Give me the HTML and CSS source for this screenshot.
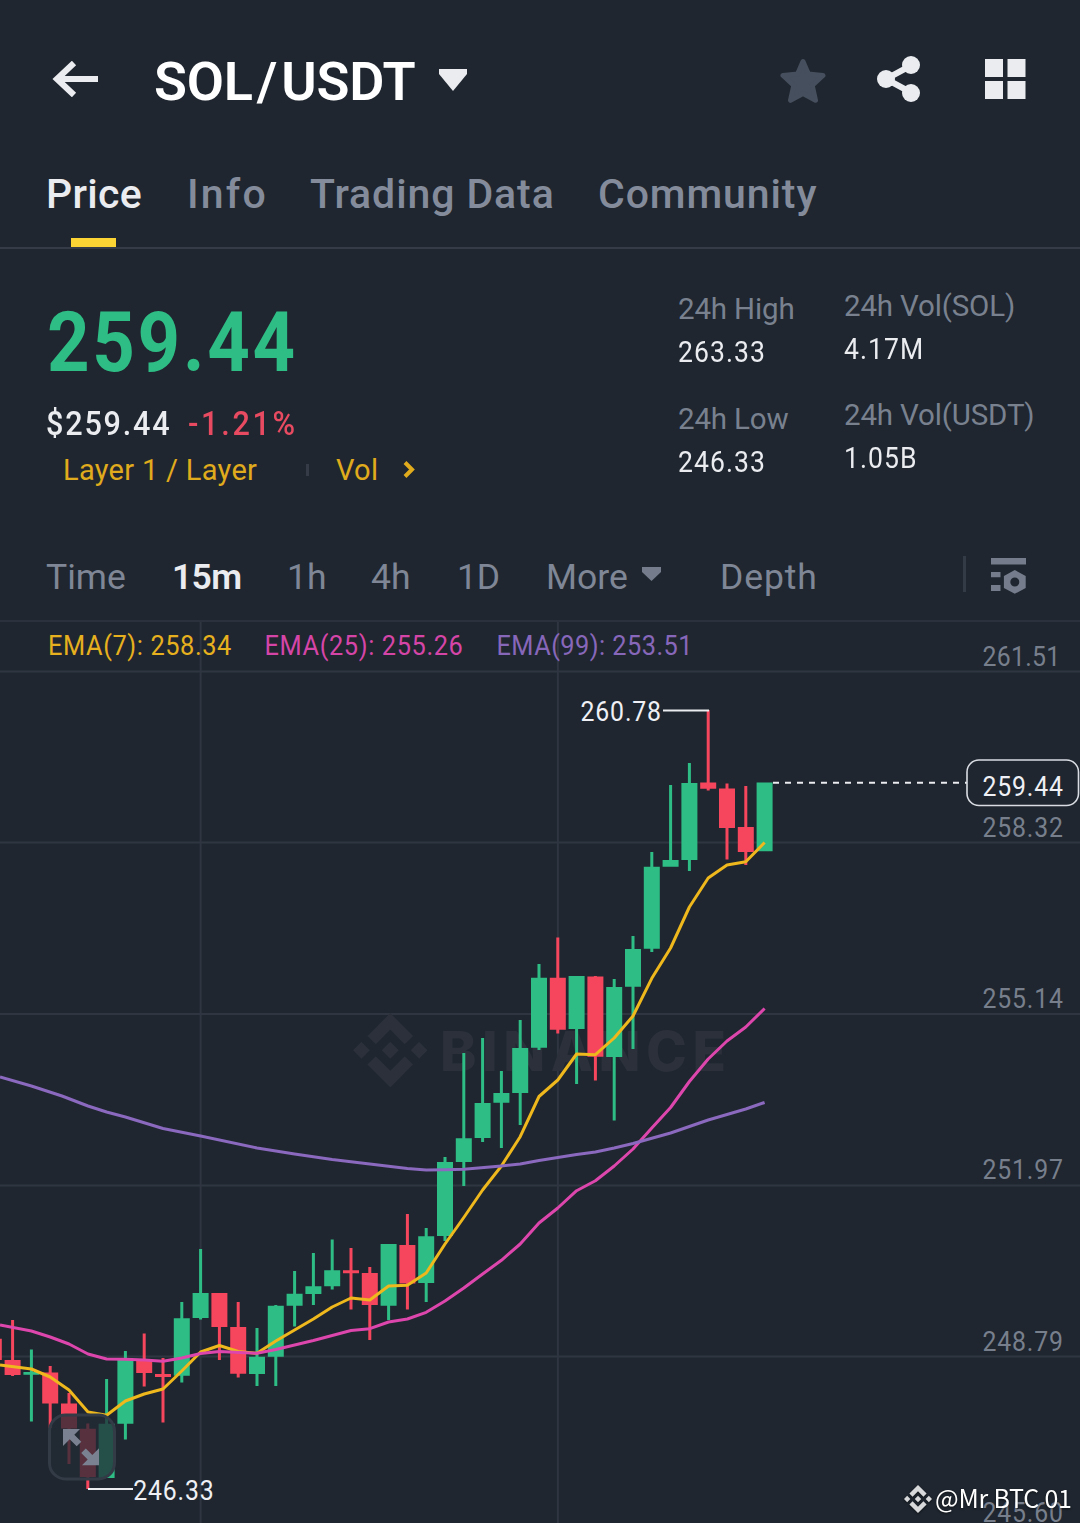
FILE: index.html
```html
<!DOCTYPE html>
<html lang="en">
<head>
<meta charset="utf-8">
<title>SOL/USDT</title>
<link rel="stylesheet" href="styles.css">
</head>
<body>
<svg class="defs" aria-hidden="true">
  <symbol id="logo" viewBox="0 0 126.61 126.61">
    <path d="M38.73 53.2l24.59-24.58 24.6 24.6 14.3-14.31L63.32 0 24.43 38.9zM0 63.31L14.3 49l14.31 14.31-14.31 14.3zM38.73 73.41L63.32 98l24.6-24.6 14.31 14.29-38.91 38.91-38.89-38.88zM98 63.31L112.3 49l14.31 14.3-14.31 14.32zM77.83 63.3L63.32 48.78 48.81 63.28l14.51 14.5z"/>
  </symbol>
</svg>
<main class="screen">
  <header class="header">
    <svg class="back" viewBox="0 0 46 36"><path d="M46 18H6M22 2L5 18l17 16" fill="none" stroke="#eaecf0" stroke-width="6.2"/></svg>
    <h1 class="pair">SOL<span class="slash">/</span>USDT</h1>
    <svg class="pair-caret" viewBox="0 0 28 22"><path d="M0 0h28v5L14 22 0 5z" fill="#eaecf0"/></svg>
    <div class="actions">
      <svg class="star" viewBox="0 0 46 46"><path d="M23 3.500l5.400 12.500 14.600 1.500-10.800 9.800 3.300 15L23 35.500l-12.500 6.800 3.300-15L3 17.500 17.600 16z" fill="#464f5d" stroke="#464f5d" stroke-width="5" stroke-linejoin="round"/></svg>
      <svg class="share" viewBox="0 0 44 46"><path d="M35 9L9 23l26 14" fill="none" stroke="#eaecf0" stroke-width="6"/><g fill="#eaecf0"><circle cx="9" cy="23" r="9"/><circle cx="34" cy="9" r="9"/><circle cx="34" cy="37" r="9"/></g></svg>
      <svg class="grid-icon" viewBox="0 0 40 40"><path d="M0 0h18v18H0zM22.500 0h18v18h-18zM0 22h18v18H0zM22.500 22h18v18h-18z" fill="#eaecf0"/></svg>
    </div>
  </header>

  <nav class="tabs">
    <a class="tab active">Price</a>
    <a class="tab info">Info</a>
    <a class="tab">Trading Data</a>
    <a class="tab">Community</a>
  </nav>

  <section class="summary">
    <div class="quote">
      <div class="last">259.44</div>
      <div class="change"><span class="fiat">$259.44</span><span class="pct">-1.21%</span></div>
      <div class="tags">
        <span class="tag layer">Layer 1 / Layer</span>
        <i class="tag-sep"></i>
        <span class="tag vol">Vol</span>
        <svg class="chevron" viewBox="0 0 12 17"><path d="M2 1.500l7 7-7 7" fill="none" stroke="#e0ab1c" stroke-width="4"/></svg>
      </div>
    </div>
    <dl class="stats">
      <div class="stat"><dt>24h High</dt><dd>263.33</dd></div>
      <div class="stat"><dt>24h Low</dt><dd>246.33</dd></div>
    </dl>
    <dl class="stats volume">
      <div class="stat"><dt>24h Vol(SOL)</dt><dd>4.17M</dd></div>
      <div class="stat"><dt>24h Vol(USDT)</dt><dd>1.05B</dd></div>
    </dl>
  </section>

  <nav class="intervals">
    <a class="interval time">Time</a>
    <a class="interval current">15m</a>
    <a class="interval hour">1h</a>
    <a class="interval">4h</a>
    <a class="interval day">1D</a>
    <a class="interval more">More<svg class="more-caret" viewBox="0 0 19 14"><path d="M0 0h19v5l-9.500 9L0 5z" fill="#757d8c"/></svg></a>
    <a class="interval depth">Depth</a>
    <i class="tool-sep"></i>
    <svg class="tool" viewBox="0 0 36 36"><path d="M0 0h35v6.500H0zM0 14h9.500v5.300H0zM0 27h9.500v6H0z" fill="#757d8c"/><path fill-rule="evenodd" d="M23.800 12l10.900 5.900v12L23.800 35.800 12.900 29.900v-12zM23.800 19.500a4.500 4.500 0 1 0 0 9 4.500 4.500 0 0 0 0-9z" fill="#757d8c"/></svg>
  </nav>

  <section class="chart">
    <svg class="plot" viewBox="0 622 1080 901">
      <path class="gridline" d="M0 671.500H1080M0 842.500H1080M0 1014H1080M0 1185.500H1080M0 1356.500H1080M200.600 622V1523M557.900 622V1523"/>
      <g class="brand">
        <use href="#logo" x="353" y="1013" width="74.500" height="74.500"/>
        <text x="440" y="1071" textLength="286">BINANCE</text>
      </g>
      <g class="axis" transform="translate(982.500 0) scale(.92 1)">
        <text x="0" y="666.500" textLength="84.500">261.51</text>
        <text x="0" y="837.500" textLength="87.500">258.32</text>
        <text x="0" y="1008.500" textLength="87.500">255.14</text>
        <text x="0" y="1179.500" textLength="87.500">251.97</text>
        <text x="0" y="1351.500" textLength="87.500">248.79</text>
        <text x="0" y="1522.500" textLength="87.500">245.60</text>
      </g>

      <path class="wick up" d="M689.400 763V871M670.600 785V866M651.800 852V952M633 936V1049M614.200 979V1120.500M576.600 976V1084M539 964V1050M520.200 1020V1125M501.400 1071V1148M482.600 1038V1142M463.800 1053V1186M445 1157V1241M426.200 1228V1302M388.600 1244V1320M332.200 1239.500V1289.500M313.400 1253V1305M294.600 1271V1326.500M275.800 1305V1386M257 1328V1386M200.600 1249V1319.500M181.800 1302V1382.500M125.400 1351V1439.500M106.600 1379V1477M31.400 1349.500V1421.500"/>
      <path class="wick down" d="M745.800 786V865M727 783.500V859.500M708.200 710V790.500M595.400 976V1080.500M557.800 937.500V1033.500M407.400 1214V1309.500M369.800 1267V1340M351 1248V1309.500M238.200 1302V1377.500M219.400 1293V1360M163 1358V1422.500M144.200 1333.500V1386.500M87.800 1423.500V1489M69 1393V1464M50.200 1366V1428M12.600 1320V1376"/>
      <path class="body up" d="M764.600 782.500V851.300M689.400 783V860M670.600 860V866.700M651.800 866.700V948.700M633 949V986.800M614.200 987V1057M576.600 976V1029M539 977.700V1047.700M520.200 1048V1093M501.400 1093V1102.700M482.600 1103V1138M463.800 1138.300V1162M445 1162V1236M426.200 1236.300V1283M388.600 1244V1305.700M332.200 1270.300V1286.300M313.400 1286.300V1294M294.600 1293.700V1305.700M275.800 1305.700V1356.700M257 1356.700V1374M200.600 1293V1318M181.800 1318.300V1375.700M125.400 1360V1423.700M106.600 1423.700V1478M31.400 1372V1374.800"/>
      <path class="body down" d="M745.800 827V852M727 788.500V828M708.200 782.500V788.700M595.400 976.500V1056.700M557.800 977.700V1029.700M407.400 1245V1283.500M369.800 1273V1305M351 1270.300V1273.200M238.200 1327V1373.700M219.400 1293V1327M163 1374V1377M144.200 1360V1373M87.800 1428.700V1477M69 1403.500V1428.500M50.200 1372.500V1403.500M12.600 1360V1375M-6.200 1338.700V1360"/>

      <polyline class="ema ema7" points="0,1365 31.400,1369 50.200,1377 69,1390 88,1412 106.600,1415.300 125.400,1401 144.200,1394 163,1389 181.800,1371 200.600,1352 219.400,1345.500 238.200,1351.500 257,1353.300 275.800,1341 294.600,1330 313.400,1319 332.200,1307 351,1298 369.800,1300 388.600,1286 407.400,1285.300 426.200,1273 445,1244 463.800,1217.500 482.600,1190 501.400,1166 520.200,1136.700 539,1096.500 557.800,1080 576.600,1054 595.400,1054.700 614.200,1038 633,1016 651.800,978.300 670.600,948 689.400,907 708.200,878 727,865 745.800,861.700 764.600,842.500"/>
      <polyline class="ema ema25" points="0,1325 31.400,1331 50.200,1337 69,1344 88,1354 106.600,1359 125.400,1359.300 144.200,1360 163,1361.300 181.800,1358 200.600,1353.500 219.400,1351.500 257,1353.300 275.800,1349.500 313.400,1340.500 351,1330.500 369.800,1328.700 388.600,1322 407.400,1319 426.200,1312.300 445,1301 463.800,1288 482.600,1274 501.400,1260.300 520.200,1244 539,1223 557.800,1208 576.600,1190.700 595.400,1180.700 614.200,1166 633,1149 651.800,1128 670.600,1107.500 689.400,1081.500 708.200,1059 727,1041 745.800,1027 764.600,1008.500"/>
      <polyline class="ema ema99" points="0,1077 31.400,1086 62,1096 88,1106 106.600,1112 125.400,1117 163,1128.500 200.600,1136 257,1148 294.600,1154 332.200,1159.500 369.800,1164 407.400,1168.500 426.200,1170 445,1169.800 463.800,1169.300 501.400,1166 520.200,1164 539,1160.500 576.600,1154.500 595.400,1152 614.200,1148 633,1143.500 670.600,1133 708.200,1120 745.800,1109 764.600,1102.500"/>

      <g class="legend" transform="scale(.94 1)">
        <text class="l7" x="51.100" y="655.500" textLength="195">EMA(7): 258.34</text>
        <text class="l25" x="281.400" y="655.500" textLength="211">EMA(25): 255.26</text>
        <text class="l99" x="528.200" y="655.500" textLength="208.500">EMA(99): 253.51</text>
      </g>

      <path class="leader" d="M663 710.500H709M88 1489H133"/>
      <g class="callout" transform="scale(.92 1)">
        <text x="631" y="721" textLength="87.500">260.78</text>
        <text x="144.800" y="1500" textLength="87.500">246.33</text>
      </g>

      <path class="price-line" d="M773 782.700H967"/>
      <rect class="price-box" x="967" y="760" width="111.500" height="45.500" rx="12"/>
      <text class="price-text" transform="translate(982.500 796) scale(.92 1)" textLength="87.500">259.44</text>

      <g class="expand">
        <rect x="49.500" y="1415" width="65" height="64" rx="16"/>
        <path d="M63 1429h17l-5.700 5.700 7 7-4.600 4.600-7-7L63 1446zM99 1465.300H82l5.700-5.700-6.500-6.500 4.600-4.600 6.500 6.500L99 1448.300z"/>
      </g>

      <g class="author">
        <use href="#logo" x="904" y="1485" width="28" height="28"/>
        <text x="935" y="1508" textLength="137">@Mr BTC 01</text>
      </g>
    </svg>
  </section>
</main>
</body>
</html>
```
FILE: styles.css
```css
* { box-sizing: border-box; }

body {
  margin: 0;
  background: #1f262f;
  color: #eaecf0;
  font-family: Roboto, "Liberation Sans", sans-serif;
}

.defs { display: none; }

.screen {
  width: 1080px;
  height: 1523px;
  overflow: hidden;
  display: flex;
  flex-direction: column;
}

.screen svg { display: block; flex: none; }

/* Header */
.header {
  height: 158px;
  padding: 0 55px 0 52px;
  display: flex;
  align-items: center;
}

.back { width: 46px; height: 36px; }

.pair {
  width: 285px;
  margin: 5px 0 0 56px;
  font-size: 54px;
  font-weight: 600;
  line-height: 64px;
  letter-spacing: -0.2px;
  color: #fff;
  white-space: nowrap;
}

.slash { margin: 0 4px; }

.pair-caret { width: 28px; height: 22px; margin-top: 2px; }

.actions { margin-left: auto; display: flex; align-items: center; }
.star { width: 46px; height: 46px; margin-top: 3px; }
.share { width: 44px; height: 46px; margin-left: 51px; }
.grid-icon { width: 40px; height: 40px; margin-left: 64px; overflow: visible; }

/* Tabs */
.tabs {
  height: 91px;
  padding-left: 46px;
  border-bottom: 2px solid #353c47;
  display: grid;
  grid-template-columns: 141px 123px 288px 240px;
}

.tab {
  padding-top: 1px;
  font-size: 41px;
  font-weight: 500;
  line-height: 71px;
  letter-spacing: 0.9px;
  color: #848c9b;
  white-space: nowrap;
}

.tab.active { color: #eaecf0; letter-spacing: 0.3px; }
.tab.info { letter-spacing: 2.2px; }

.tab.active::after {
  content: "";
  display: block;
  width: 45px;
  height: 9px;
  margin: 8px 0 0 25px;
  background: #fcd535;
}

/* Price summary */
.summary {
  height: 283px;
  padding: 39px 0 0 46px;
  display: grid;
  grid-template-columns: 632px 166px 236px;
}

.quote { padding-top: 15px; }

/* Figures are set condensed with open tracking */
.last, .fiat, .pct, .stat dd {
  transform: scaleX(0.9);
  transform-origin: left center;
}

.last {
  font-size: 82.5px;
  font-weight: 700;
  line-height: 80px;
  letter-spacing: 3px;
  margin-left: 1px;
  color: #2ebd85;
}

.change {
  margin-top: 20px;
  display: flex;
  font-size: 34px;
  font-weight: 500;
  line-height: 40px;
}

.fiat { width: 142px; letter-spacing: 2px; }
.pct { color: #e84b61; letter-spacing: 3px; }

.tags {
  margin-top: 7px;
  padding-left: 17px;
  display: flex;
  align-items: center;
  font-size: 29px;
  line-height: 40px;
  letter-spacing: 0.3px;
  color: #e0ab1c;
}

.layer { width: 243px; white-space: nowrap; }
.tag-sep { width: 3px; height: 12px; background: #353c47; }
.vol { width: 67px; margin-left: 27px; }
.chevron { width: 12px; height: 17px; margin-top: -2px; }

.stats { margin: 0; display: flex; flex-direction: column; gap: 26px; }
.stats.volume { margin-top: -3px; gap: 25px; }

.stat dt, .stat dd {
  margin: 0;
  font-size: 29.5px;
  line-height: 42px;
  white-space: nowrap;
}

.stat dt { color: #79818f; letter-spacing: -0.15px; }
.stat dd { padding-top: 1px; margin-bottom: -1px; letter-spacing: 1.2px; }

/* Interval bar */
.intervals {
  height: 90px;
  padding-left: 46px;
  border-bottom: 2px solid #2b323d;
  display: flex;
  align-items: center;
  font-size: 35.5px;
  color: #7f8796;
}

.interval { width: 86px; padding-top: 2px; white-space: nowrap; }
.interval.time { width: 126px; }
.interval.current { width: 115px; color: #eaecf0; font-weight: 600; letter-spacing: -0.7px; }
.interval.hour { width: 84px; }
.interval.day { margin-left: 0; width: 89px; letter-spacing: -0.3px; }
.interval.more { width: 174px; display: flex; align-items: center; gap: 14px; }
.interval.depth { width: 243px; letter-spacing: 0.9px; }
.more-caret { width: 19px; height: 14px; margin-top: -7px; }
.tool-sep { width: 3px; height: 36px; background: #333b46; margin-top: -4px; }
.tool { width: 36px; height: 36px; margin-left: 25px; margin-top: -1px; }

/* Chart */
.chart { flex: none; height: 901px; }
.plot { width: 1080px; height: 901px; font-size: 27px; }
.gridline { fill: none; stroke: #2f3641; stroke-width: 2; }
.brand { fill: #2b303a; }
.brand text { font: 800 55px Inter, sans-serif; }
.axis { fill: #787f8c; }

.wick, .body, .ema { fill: none; }
.wick { stroke-width: 3; }
.body { stroke-width: 16; }
.up { stroke: #2ebd85; }
.down { stroke: #f6465d; }

.ema { stroke-width: 3; stroke-linejoin: round; }
.ema7 { stroke: #efb81c; }
.ema25 { stroke: #dd46ac; }
.ema99 { stroke: #8a69be; }

.l7 { fill: #e6b01e; }
.l25 { fill: #d545a8; }
.l99 { fill: #8767ba; }

.leader { fill: none; stroke: #eaecf0; stroke-width: 2; }
.callout, .price-text { fill: #eef0f5; }
.price-line { stroke: #eaecf0; stroke-width: 2; stroke-dasharray: 6 6; }
.price-box { fill: #1f262f; stroke: #d9dce3; stroke-width: 1.6; }

.expand rect { fill: #232b36; fill-opacity: 0.75; stroke: #323b46; stroke-width: 3; }
.expand path { fill: #7a8291; }

.author { fill: #fff; filter: drop-shadow(0 1px 1px rgba(0, 0, 0, 0.5)); }
.author use { fill: #d8d9da; }
.author text { font: 25px "Noto Sans CJK SC", "Noto Sans", sans-serif; }
```
